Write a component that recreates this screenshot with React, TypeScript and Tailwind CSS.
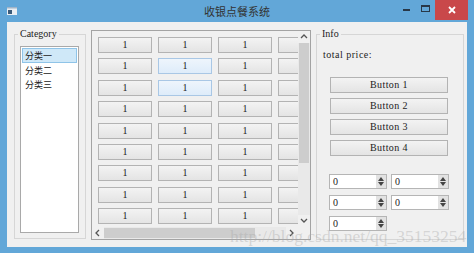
import React from "react";

const serif = "font-['Liberation_Serif',serif]";
const cjk = "font-['Noto_Sans_CJK_SC',sans-serif]";

const categories = ["分类一", "分类二", "分类三"];
const hotCells = ["1-1", "2-1"];

const Chevron = ({ dir }: { dir: "up" | "down" | "left" | "right" }) => {
  const d = {
    up: "M1 5 L4 2 L7 5",
    down: "M1 2 L4 5 L7 2",
    left: "M5 1 L2 4 L5 7",
    right: "M2 1 L5 4 L2 7",
  }[dir];
  return (
    <svg width="8" height="8" viewBox="0 0 8 8">
      <path d={d} fill="none" stroke="#555" strokeWidth="1.3" />
    </svg>
  );
};

const PushButton = ({
  label,
  hot,
  className,
}: {
  label: string;
  hot?: boolean;
  className?: string;
}) => (
  <div
    className={`flex items-center justify-center border text-[10px] leading-none text-[#1c1c1c] ${serif} ${
      hot
        ? "border-[#a9c7e5] bg-linear-to-b from-[#eef5fc] to-[#deecfa]"
        : "border-[#b3b3b3] bg-linear-to-b from-[#f3f3f3] to-[#e4e4e4]"
    } ${className ?? ""}`}
  >
    {label}
  </div>
);

const SpinBox = () => (
  <div className="flex w-[58px] h-[15px] border border-[#b5b5b5] bg-white">
    <div className={`flex-1 pl-[3px] text-[10px] leading-[13px] text-[#222] ${serif}`}>0</div>
    <div className="w-[10px] bg-[#e2e2e2] flex flex-col items-center justify-center gap-[1px]">
      <svg width="6" height="4" viewBox="0 0 6 4">
        <path d="M0 4 L3 0 L6 4 Z" fill="#444" />
      </svg>
      <svg width="6" height="4" viewBox="0 0 6 4">
        <path d="M0 0 L3 4 L6 0 Z" fill="#444" />
      </svg>
    </div>
  </div>
);

export default function App() {
  return (
    <div className="relative w-[474px] h-[253px] bg-[#62a7d8] flex flex-col overflow-hidden">
      {/* title bar */}
      <div className="grid grid-cols-[1fr_auto_1fr] h-[22px]">
        <div className="flex items-start pl-[7px] pt-[7px]">
          <svg width="10" height="8" viewBox="0 0 10 8">
            <rect x="0" y="0" width="10" height="8" fill="#e9eef3" />
            <rect x="1" y="3" width="4" height="4" fill="#3b5b7a" />
            <rect x="0" y="0" width="10" height="1.5" fill="#9fb4c8" />
          </svg>
        </div>
        <div className={`pt-[4px] text-[11px] leading-[15px] text-[#333] ${cjk}`}>收银点餐系统</div>
        <div className="flex items-start justify-end pr-[6px]">
          <div className="w-[18px] h-[20px] flex items-center justify-center">
            <div className="w-[7px] h-[2px] bg-[#283848]" />
          </div>
          <div className="w-[20px] h-[20px] flex items-start justify-center pt-[5px]">
            <div className="w-[9px] h-[7px] border border-[#283848] border-t-2" />
          </div>
          <div className="w-[33px] h-[20px] bg-[#c9484a] flex items-center justify-center">
            <svg width="8" height="8" viewBox="0 0 8 8">
              <path d="M1 1 L7 7 M7 1 L1 7" stroke="#fff" strokeWidth="1.8" />
            </svg>
          </div>
        </div>
      </div>

      {/* client area */}
      <div className="mx-[7px] h-[225px] bg-[#f0f0f0] flex items-start pt-[6px] pl-[7px]">
        {/* category */}
        <fieldset className="w-[72px] h-[211px] border border-[#d6d6d6] pl-[3px]">
          <legend className={`px-[2px] text-[10px] leading-[12px] text-[#1c1c1c] ${serif}`}>Category</legend>
          <div className="mt-[6px] ml-[2px] w-[59px] h-[187px] border border-[#a9a9a9] bg-white p-[1px]">
            {categories.map((c, i) => (
              <div
                key={c}
                className={`h-[14.5px] pl-[2px] text-[9px] leading-[13px] text-[#222] ${cjk} ${
                  i === 0 ? "bg-[#cfe8f8] border border-[#8fc4e8]" : "border border-transparent"
                }`}
              >
                {c}
              </div>
            ))}
          </div>
        </fieldset>

        {/* scroll area */}
        <div className="ml-[5px] mt-[2px] w-[220px] h-[210px] border border-[#a3a3a3] flex flex-col">
          <div className="flex flex-1 min-h-0">
            <div className="flex-1 overflow-hidden pl-[6px] pt-[6px]">
              <div className="grid w-max grid-cols-[repeat(4,54px)] auto-rows-[16px] gap-x-[6px] gap-y-[5.4px]">
                {Array.from({ length: 9 }).map((_, r) =>
                  Array.from({ length: 4 }).map((_, c) => (
                    <PushButton key={`${r}-${c}`} label="1" hot={hotCells.includes(`${r}-${c}`)} />
                  ))
                )}
              </div>
            </div>
            {/* vertical scrollbar */}
            <div className="w-[12px] flex flex-col bg-[#e9e9e9]">
              <div className="h-[12px] flex items-center justify-center bg-[#f0f0f0]">
                <Chevron dir="up" />
              </div>
              <div className="flex-1">
                <div className="mx-[1px] h-[120px] bg-[#cdcdcd]" />
              </div>
              <div className="h-[12px] flex items-center justify-center bg-[#f0f0f0]">
                <Chevron dir="down" />
              </div>
            </div>
          </div>
          {/* horizontal scrollbar */}
          <div className="flex h-[12px]">
            <div className="flex-1 flex bg-[#e9e9e9]">
              <div className="w-[12px] flex items-center justify-center bg-[#f0f0f0]">
                <Chevron dir="left" />
              </div>
              <div className="flex-1 py-[1px]">
                <div className="w-[151px] h-full bg-[#cdcdcd]" />
              </div>
              <div className="w-[12px] flex items-center justify-center bg-[#f0f0f0]">
                <Chevron dir="right" />
              </div>
            </div>
            <div className="w-[12px] bg-[#f0f0f0]" />
          </div>
        </div>

        {/* info */}
        <fieldset className="ml-[5px] w-[148px] h-[212px] border border-[#d6d6d6] pl-[3px]">
          <legend className={`px-[2px] text-[10px] leading-[12px] text-[#1c1c1c] ${serif}`}>Info</legend>
          <div className={`mt-[9px] ml-[3px] text-[10px] leading-[12px] tracking-[0.5px] text-[#1c1c1c] ${serif}`}>
            total price:
          </div>
          <div className="mt-[16px] ml-[10px] flex flex-col gap-[5px]">
            {["Button 1", "Button 2", "Button 3", "Button 4"].map((b) => (
              <PushButton key={b} label={b} className="w-[118px] h-[16px] tracking-[0.4px]" />
            ))}
          </div>
          <div className="mt-[18px] ml-[9px] grid grid-cols-[58px_58px] gap-x-[4px] gap-y-[6px]">
            {Array.from({ length: 5 }).map((_, i) => (
              <SpinBox key={i} />
            ))}
          </div>
        </fieldset>
      </div>

      {/* watermark */}
      <div
        className={`absolute left-[230px] top-[228px] text-[17.5px] leading-none text-[#a9a9a966] whitespace-nowrap ${serif}`}
      >
        http://blog.csdn.net/qq_35153254
      </div>
    </div>
  );
}
